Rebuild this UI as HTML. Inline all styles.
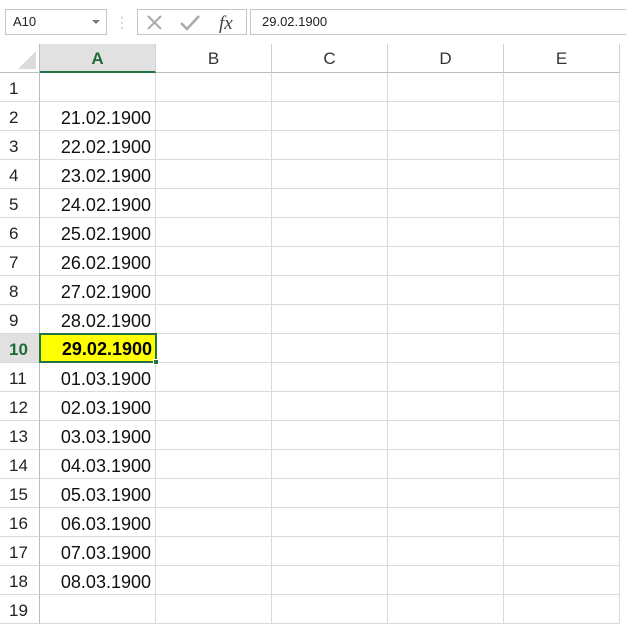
<!DOCTYPE html><html><head><style>
body{margin:0;width:626px;height:599px;overflow:hidden;background:#fff;font-family:"Liberation Sans",sans-serif;position:relative}
.a{position:absolute;box-sizing:border-box}
.rh{left:0;width:40px;height:29px;border-bottom:1px solid #dadada;border-right:1px solid #bdbdbd;background:#fff;color:#222;font-size:17px;line-height:31px;padding-left:9px}
.c{height:29px;border-bottom:1px solid #dadada;border-right:1px solid #dadada;width:116px;font-size:18px;line-height:32px;text-align:right;padding-right:4px;color:#111}
.ch{top:44px;height:29px;width:116px;border-right:1px solid #d0d0d0;border-bottom:1px solid #bdbdbd;text-align:center;font-size:17px;line-height:29px;color:#333}
</style></head><body>
<div class="a" style="left:5px;top:9px;width:102px;height:26px;border:1px solid #c6c6c6;font-size:13px;line-height:24px;padding-left:7px;color:#222">A10<span style="position:absolute;right:6px;top:10px;border-left:4px solid transparent;border-right:4px solid transparent;border-top:4px solid #777"></span></div>
<div class="a" style="left:120px;top:15px;color:#999;font-size:12px;line-height:5px">·<br>·<br>·</div>
<div class="a" style="left:137px;top:9px;width:110px;height:26px;border:1px solid #c6c6c6"></div>
<svg class="a" style="left:145px;top:13px" width="100" height="20"><path d="M3 3L16 16M16 3L3 16" stroke="#aaa" stroke-width="2" fill="none"/><path d="M36 10L42 16L54 3" stroke="#aaa" stroke-width="2.5" fill="none"/><text x="74" y="16" font-family="Liberation Serif" font-style="italic" font-size="19" fill="#444">fx</text></svg>
<div class="a" style="left:250px;top:9px;width:380px;height:26px;border:1px solid #c6c6c6;font-size:13px;line-height:24px;padding-left:11px;color:#222">29.02.1900</div>
<div class="a" style="left:0;top:44px;width:40px;height:29px;border-right:1px solid #bdbdbd;border-bottom:1px solid #bdbdbd"></div>
<svg class="a" style="left:18px;top:51px" width="18" height="18"><path d="M18 0V18H0Z" fill="#dcdcdc"/></svg>
<div class="a ch" style="left:40px;background:#e1e1e1;border-bottom:2px solid #217346;color:#1e6b3a;font-weight:bold">A</div>
<div class="a ch" style="left:156px">B</div>
<div class="a ch" style="left:272px">C</div>
<div class="a ch" style="left:388px">D</div>
<div class="a ch" style="left:504px">E</div>
<div id="g"></div>
<script>
var d=["","21.02.1900","22.02.1900","23.02.1900","24.02.1900","25.02.1900","26.02.1900","27.02.1900","28.02.1900","29.02.1900","01.03.1900","02.03.1900","03.03.1900","04.03.1900","05.03.1900","06.03.1900","07.03.1900","08.03.1900","",""];
var h="";for(var i=0;i<19;i++){var t=73+i*29,s=i==9;
h+='<div class="a rh" style="top:'+t+'px;'+(s?'background:#e1e1e1;color:#1e6b3a;font-weight:bold;':'')+'">'+(i+1)+'</div>';
for(var c=0;c<5;c++){h+='<div class="a c" style="top:'+t+'px;left:'+(40+c*116)+'px">'+(c==0?d[i]:'')+'</div>';}}
document.getElementById('g').innerHTML=h;
</script>
<div class="a" style="left:39px;top:333px;width:118px;height:30px;border:2px solid #217346;background:#ffff00;font-size:18px;font-weight:bold;line-height:29px;text-align:right;padding-right:3px;color:#000">29.02.1900</div>
<div class="a" style="left:153px;top:359px;width:6px;height:6px;background:#217346;border:1px solid #fff"></div>
</body></html>
